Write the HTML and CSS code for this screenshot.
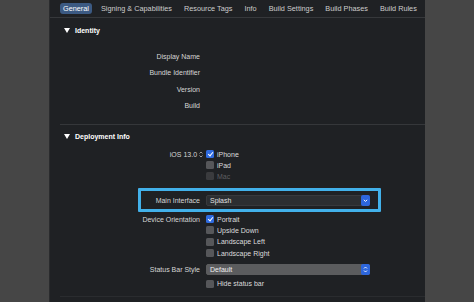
FILE: index.html
```html
<!DOCTYPE html>
<html lang="en">
<head>
    <meta charset="UTF-8">
    <meta name="viewport" content="width=device-width, initial-scale=1.0">
    <title>General</title>
    <link rel="stylesheet" href="styles.css">
</head>
<body>
    <div class="window">
        <div class="side"></div>

        <div class="main">
            <div class="tabs">
                <span class="tab active">General</span>
                <span class="tab">Signing &amp; Capabilities</span>
                <span class="tab">Resource Tags</span>
                <span class="tab">Info</span>
                <span class="tab">Build Settings</span>
                <span class="tab">Build Phases</span>
                <span class="tab">Build Rules</span>
            </div>

            <div class="section-head">
                <svg class="disclosure" width="6" height="5" viewBox="0 0 6 5"><polygon points="0,0 6,0 3,5" fill="#fff"/></svg>
                Identity
            </div>
            <div class="identity">
                <div class="row"><div class="label">Display Name</div><div></div></div>
                <div class="row"><div class="label">Bundle Identifier</div><div></div></div>
                <div class="row"><div class="label">Version</div><div></div></div>
                <div class="row"><div class="label">Build</div><div></div></div>
            </div>

            <div class="divider"></div>

            <div class="section-head deploy">
                <svg class="disclosure" width="6" height="5" viewBox="0 0 6 5"><polygon points="0,0 6,0 3,5" fill="#fff"/></svg>
                Deployment Info
            </div>
            <div class="devices">
                <div class="row check">
                    <div class="label stepper-label">iOS 13.0
                        <svg class="stepper" width="4" height="7" viewBox="0 0 4 7"><path d="M0.5 2.5 L2 1 L3.5 2.5 M0.5 4.5 L2 6 L3.5 4.5" stroke="#bbb" stroke-width="0.8" fill="none"/></svg>
                    </div>
                    <div class="value"><span class="box on"></span>iPhone</div>
                </div>
                <div class="row check">
                    <div class="label"></div>
                    <div class="value"><span class="box"></span>iPad</div>
                </div>
                <div class="row check">
                    <div class="label"></div>
                    <div class="value disabled"><span class="box"></span>Mac</div>
                </div>
            </div>

            <div class="row main-interface">
                <div class="highlight"></div>
                <div class="label">Main Interface</div>
                <div class="popup">
                    <span>Splash</span>
                    <span class="popup-btn">
                        <svg width="9" height="9" viewBox="0 0 9 9"><path d="M2.8 3.8 L4.5 5.4 L6.2 3.8" stroke="#fff" stroke-width="1" fill="none"/></svg>
                    </span>
                </div>
            </div>

            <div class="orientation">
                <div class="row check">
                    <div class="label">Device Orientation</div>
                    <div class="value"><span class="box on"></span>Portrait</div>
                </div>
                <div class="row check">
                    <div class="label"></div>
                    <div class="value"><span class="box"></span>Upside Down</div>
                </div>
                <div class="row check">
                    <div class="label"></div>
                    <div class="value"><span class="box"></span>Landscape Left</div>
                </div>
                <div class="row check">
                    <div class="label"></div>
                    <div class="value"><span class="box"></span>Landscape Right</div>
                </div>
            </div>

            <div class="row status-style">
                <div class="label">Status Bar Style</div>
                <div class="popup light">
                    <span>Default</span>
                    <span class="popup-btn">
                        <svg width="9" height="9" viewBox="0 0 9 9"><path d="M3 3.5 L4.5 2 L6 3.5 M3 5.5 L4.5 7 L6 5.5" stroke="#fff" stroke-width="0.9" fill="none"/></svg>
                    </span>
                </div>
            </div>
            <div class="row check hide-bar">
                <div class="label"></div>
                <div class="value"><span class="box"></span>Hide status bar</div>
            </div>

            <div class="divider bottom"></div>
        </div>

        <div class="side"></div>
    </div>
</body>
</html>
```

FILE: styles.css
```css
body, html {
    margin: 0;
    height: 100%;
    font-family: "Liberation Sans", Arial, sans-serif;
    font-size: 7px;
    background-color: #464646;
}

.window {
    display: flex;
    height: 302px;
}

.side {
    width: 49px;
    background-color: #464646;
}

.main {
    flex: 1;
    background-color: #1f2124;
    border-left: 1px solid #2a2b2d;
    color: #d6d6d6;
    overflow: hidden;
}

/* tab bar */
.tabs {
    display: flex;
    align-items: center;
    gap: 6px;
    height: 17px;
    padding-left: 10px;
    border-bottom: 1px solid #36383b;
    font-size: 7.3px;
}
.tab {
    padding: 0 3px;
    line-height: 11px;
    color: #cdcdcd;
    border-radius: 3px;
}
.tab.active {
    background-color: #3c5a83;
    color: #fff;
}

/* section headers */
.section-head {
    display: flex;
    align-items: center;
    height: 12px;
    margin-top: 6px;
    padding-left: 14px;
    color: #fff;
    font-weight: bold;
}
.section-head.deploy {
    margin-top: 5px;
}
.disclosure {
    margin-right: 5px;
}

.divider {
    height: 1px;
    margin: 10px 0 0 10px;
    background-color: #35373a;
}
.divider.bottom {
    margin-top: 6.5px;
    background-color: #2a2c2f;
}

/* form rows */
.row {
    display: grid;
    grid-template-columns: 150px 1fr;
    column-gap: 6px;
    align-items: center;
    height: 16.5px;
    position: relative;
}
.label {
    text-align: right;
    white-space: nowrap;
}
.stepper-label {
    margin-right: -3px;
}
.stepper {
    vertical-align: -1px;
}

.identity {
    margin-top: 12px;
}

.devices {
    margin-top: 6.5px;
}
.row.check {
    height: 11px;
}
.orientation {
    margin-top: 1.5px;
}
.orientation .row.check {
    height: 11.3px;
}

.value {
    display: flex;
    align-items: center;
    white-space: nowrap;
    color: #dcdcdc;
}
.value.disabled {
    color: #5e5f61;
}
.box {
    width: 8px;
    height: 8px;
    margin-right: 3px;
    border-radius: 1.5px;
    background-color: #56575a;
    position: relative;
}
.value.disabled .box {
    background-color: #3a3b3e;
}
.box.on {
    background-color: #2f6be0;
}
.box.on::after {
    content: "";
    position: absolute;
    left: 2.7px;
    top: 0.8px;
    width: 2px;
    height: 4.2px;
    border: solid #fff;
    border-width: 0 1.2px 1.2px 0;
    transform: rotate(40deg);
}

/* popups */
.main-interface {
    margin-top: 6.5px;
    height: 24px;
}
.highlight {
    position: absolute;
    left: 88px;
    top: 0;
    width: 243px;
    height: 24px;
    box-sizing: border-box;
    border: 3px solid #42b1ea;
    border-radius: 1px;
    pointer-events: none;
}
.popup {
    display: flex;
    align-items: center;
    justify-content: space-between;
    width: 164px;
    height: 11px;
    box-sizing: border-box;
    padding-left: 3px;
    border-radius: 2px;
    background-color: #2c2e31;
    border: 1px solid #38393c;
    color: #e0e0e0;
}
.popup.light {
    background-color: #5b5c5e;
    border-color: #5b5c5e;
    color: #eee;
}
.popup-btn {
    display: flex;
    align-items: center;
    justify-content: center;
    width: 9px;
    height: 11px;
    margin-right: -1px;
    border-radius: 2px;
    background-color: #2d66dc;
}

.status-style {
    margin-top: 5.8px;
    height: 11px;
}
.hide-bar {
    margin-top: 3px;
}
```
